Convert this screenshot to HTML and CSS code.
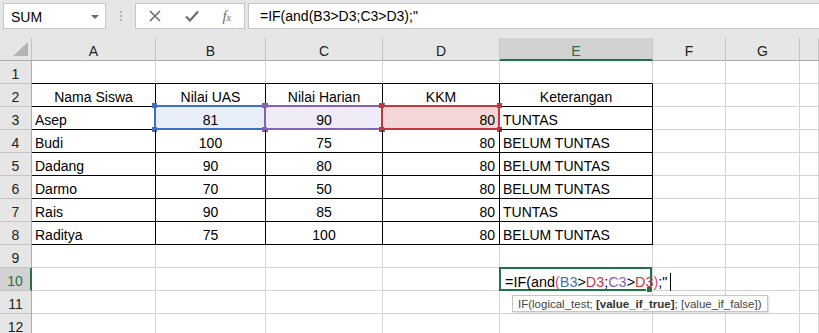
FILE: index.html
```html
<!DOCTYPE html>
<html lang="id">

<head>
    <meta charset="UTF-8">
    <title>Rumus IF AND</title>
    <link rel="stylesheet" href="styles.css">
</head>

<body>

    <!-- Formula bar -->
    <div class="toolbar">
        <div class="name-box">
            <span>SUM</span>
            <span class="caret"></span>
        </div>
        <div class="grip"><i></i><i></i><i></i></div>
        <div class="buttons">
            <svg width="12" height="12" viewBox="0 0 12 12"><path d="M1 1L11 11M11 1L1 11" stroke="#6d6d6d" stroke-width="1.6" fill="none"/></svg>
            <svg width="14" height="12" viewBox="0 0 14 12"><path d="M1 6.5L5 10.5L13 1.5" stroke="#6d6d6d" stroke-width="2.2" fill="none"/></svg>
            <span class="fx">f<sub>x</sub></span>
        </div>
        <div class="formula">=IF(and(B3&gt;D3;C3&gt;D3);"</div>
    </div>

    <!-- Lembar kerja -->
    <div class="sheet">
        <div class="c hd corner"><span class="tri"></span></div>
        <div class="c hd">A</div>
        <div class="c hd">B</div>
        <div class="c hd">C</div>
        <div class="c hd">D</div>
        <div class="c hd hd-sel">E</div>
        <div class="c hd">F</div>
        <div class="c hd">G</div>
        <div class="c hd"></div>

        <div class="c rh">1</div>
        <div class="c bb"></div><div class="c bb"></div><div class="c bb"></div><div class="c bb"></div><div class="c bb"></div>
        <div class="c"></div><div class="c"></div><div class="c"></div>

        <div class="c rh">2</div>
        <div class="c t ctr">Nama Siswa</div>
        <div class="c t ctr">Nilai UAS</div>
        <div class="c t ctr">Nilai Harian</div>
        <div class="c t ctr">KKM</div>
        <div class="c t ctr">Keterangan</div>
        <div class="c"></div><div class="c"></div><div class="c"></div>

        <div class="c rh">3</div>
        <div class="c t">Asep</div>
        <div class="c t ctr fill-blue"><span class="ref ref-blue"><i></i><i></i><i></i><i></i></span>81</div>
        <div class="c t ctr fill-purple"><span class="ref ref-purple"><i></i><i></i><i></i><i></i></span>90</div>
        <div class="c t num fill-red"><span class="ref ref-red"><i></i><i></i><i></i><i></i></span>80</div>
        <div class="c t">TUNTAS</div>
        <div class="c"></div><div class="c"></div><div class="c"></div>

        <div class="c rh">4</div>
        <div class="c t">Budi</div>
        <div class="c t ctr">100</div>
        <div class="c t ctr">75</div>
        <div class="c t num">80</div>
        <div class="c t">BELUM TUNTAS</div>
        <div class="c"></div><div class="c"></div><div class="c"></div>

        <div class="c rh">5</div>
        <div class="c t">Dadang</div>
        <div class="c t ctr">90</div>
        <div class="c t ctr">80</div>
        <div class="c t num">80</div>
        <div class="c t">BELUM TUNTAS</div>
        <div class="c"></div><div class="c"></div><div class="c"></div>

        <div class="c rh">6</div>
        <div class="c t">Darmo</div>
        <div class="c t ctr">70</div>
        <div class="c t ctr">50</div>
        <div class="c t num">80</div>
        <div class="c t">BELUM TUNTAS</div>
        <div class="c"></div><div class="c"></div><div class="c"></div>

        <div class="c rh">7</div>
        <div class="c t">Rais</div>
        <div class="c t ctr">90</div>
        <div class="c t ctr">85</div>
        <div class="c t num">80</div>
        <div class="c t">TUNTAS</div>
        <div class="c"></div><div class="c"></div><div class="c"></div>

        <div class="c rh">8</div>
        <div class="c t">Raditya</div>
        <div class="c t ctr">75</div>
        <div class="c t ctr">100</div>
        <div class="c t num">80</div>
        <div class="c t">BELUM TUNTAS</div>
        <div class="c"></div><div class="c"></div><div class="c"></div>

        <div class="c rh">9</div>
        <div class="c"></div><div class="c"></div><div class="c"></div><div class="c"></div>
        <div class="c"></div><div class="c"></div><div class="c"></div><div class="c"></div>

        <div class="c rh rh-sel">10</div>
        <div class="c"></div><div class="c"></div><div class="c"></div><div class="c"></div>
        <div class="c edit">
            <span class="edit-box"><i></i></span>
            <span class="edit-text">=IF(and<span class="p">(</span><span class="k-blue">B3</span>&gt;<span class="k-red">D3</span>;<span class="k-purple">C3</span>&gt;<span class="k-red">D3</span><span class="p">)</span>;"</span><span class="cursor"></span>
            <div class="tip">IF(logical_test; <b>[value_if_true]</b>; [value_if_false])</div>
        </div>
        <div class="c"></div><div class="c"></div><div class="c"></div>

        <div class="c rh">11</div>
        <div class="c"></div><div class="c"></div><div class="c"></div><div class="c"></div>
        <div class="c"></div><div class="c"></div><div class="c"></div><div class="c"></div>

        <div class="c rh">12</div>
        <div class="c"></div><div class="c"></div><div class="c"></div><div class="c"></div>
        <div class="c"></div><div class="c"></div><div class="c"></div><div class="c"></div>
    </div>

</body>

</html>
```

FILE: styles.css
```css
body {
    margin: 0;
    background-color: white;
    font-family: "Liberation Sans", Arial, sans-serif;
    font-size: 14px;
    color: black;
    overflow: hidden;
}

/* Formula bar */
.toolbar {
    display: flex;
    align-items: flex-start;
    height: 38px;
    padding: 3px 0 0 3px;
    box-sizing: border-box;
    background-color: #e6e6e6;
}

.name-box, .buttons, .formula {
    height: 26px;
    box-sizing: border-box;
    background-color: white;
    border: 1px solid #c6c6c6;
}

.name-box {
    width: 103px;
    display: flex;
    align-items: center;
    justify-content: space-between;
    padding: 1px 6px 0 7px;
}

.caret {
    width: 0;
    height: 0;
    border-left: 4px solid transparent;
    border-right: 4px solid transparent;
    border-top: 4px solid #6a6a6a;
}

.grip {
    width: 29px;
    display: flex;
    flex-direction: column;
    align-items: center;
    gap: 2px;
    padding-top: 8px;
}

.grip i {
    width: 2px;
    height: 2px;
    background-color: #b4b4b4;
}

.buttons {
    width: 110px;
    display: flex;
    align-items: center;
    justify-content: space-between;
    padding: 0 13px 0 13px;
}

.fx {
    font-family: "Liberation Serif", serif;
    font-style: italic;
    font-size: 15px;
    color: #6d6d6d;
    line-height: 1;
}

.fx sub {
    font-size: 10px;
    vertical-align: 0;
}

.formula {
    flex: 1;
    margin-left: 3px;
    padding: 4px 0 0 11px;
    border-right: none;
}

/* Sheet */
.sheet {
    display: grid;
    grid-template-columns: 32px 124px 110px 117px 117px 153px 73px 74px 1fr;
    grid-auto-rows: 23px;
}

.c {
    position: relative;
    box-sizing: border-box;
    border-right: 1px solid #d4d4d4;
    border-bottom: 1px solid #d4d4d4;
    padding: 5px 3px 0 3px;
    line-height: 17px;
    white-space: nowrap;
}

.hd {
    background-color: #e6e6e6;
    border-right-color: #c3c3c3;
    border-bottom-color: #ababab;
    text-align: center;
    color: #222;
}

.hd-sel {
    background-color: #d2d2d2;
    color: #217346;
    border-bottom: 2px solid #217346;
}

.corner .tri {
    position: absolute;
    right: 3px;
    bottom: 4px;
    width: 0;
    height: 0;
    border-left: 15px solid transparent;
    border-bottom: 14px solid #b4b4b4;
}

.rh {
    background-color: #e6e6e6;
    border-right-color: #ababab;
    border-bottom-color: #c3c3c3;
    text-align: center;
    color: #222;
    padding-left: 0;
    padding-right: 0;
}

.rh-sel {
    background-color: #d2d2d2;
    color: #217346;
    border-right: 2px solid #217346;
}

.bb {
    border-bottom-color: black;
}

.t {
    border-right-color: black;
    border-bottom-color: black;
}

.ctr {
    text-align: center;
}

.num {
    text-align: right;
    padding-right: 4px;
}

/* Highlighted references */
.fill-blue { background-color: #e8eef8; }
.fill-purple { background-color: #efecf7; }
.fill-red { background-color: #f5d6d7; }

.ref {
    position: absolute;
    top: -2px;
    left: -2px;
    right: -1px;
    bottom: -1px;
    border: 2px solid;
}

.ref i {
    position: absolute;
    width: 5px;
    height: 5px;
}

.ref i:nth-child(1) { top: -4px; left: -4px; }
.ref i:nth-child(2) { top: -4px; right: -4px; }
.ref i:nth-child(3) { bottom: -4px; left: -4px; }
.ref i:nth-child(4) { bottom: -4px; right: -4px; }

.ref-blue { border-color: #3d6fc6; }
.ref-blue i { background-color: #3d6fc6; }
.ref-purple { border-color: #8561b9; }
.ref-purple i { background-color: #8561b9; }
.ref-red { border-color: #c5373f; }
.ref-red i { background-color: #c5373f; }

/* Cell in edit mode */
.edit {
    overflow: visible;
    z-index: 2;
}

.edit-box {
    position: absolute;
    top: -1px;
    left: -1px;
    right: 0;
    bottom: -1px;
    border: 2px solid #217346;
}

.edit-box i {
    position: absolute;
    right: -3px;
    bottom: -4px;
    width: 5px;
    height: 5px;
    background-color: #217346;
    border: 1px solid white;
}

.edit-text {
    position: relative;
    padding-left: 2px;
    font-size: 14.4px;
}

.k-blue { color: #3d6fc6; }
.k-red { color: #d0323f; }
.k-purple { color: #8561b9; }
.p { color: #e0457b; }

.cursor {
    display: inline-block;
    width: 1px;
    height: 18px;
    margin-left: 3px;
    vertical-align: -4px;
    background-color: black;
}

.tip {
    position: absolute;
    top: 27px;
    left: 12px;
    height: 17px;
    box-sizing: border-box;
    padding: 1px 5px 0 5px;
    background-color: white;
    border: 1px solid #c6c6c6;
    box-shadow: 1px 1px 2px rgba(0, 0, 0, 0.15);
    font-size: 11.5px;
    line-height: 14px;
    color: #444;
}

.tip b {
    color: #333;
}
```
